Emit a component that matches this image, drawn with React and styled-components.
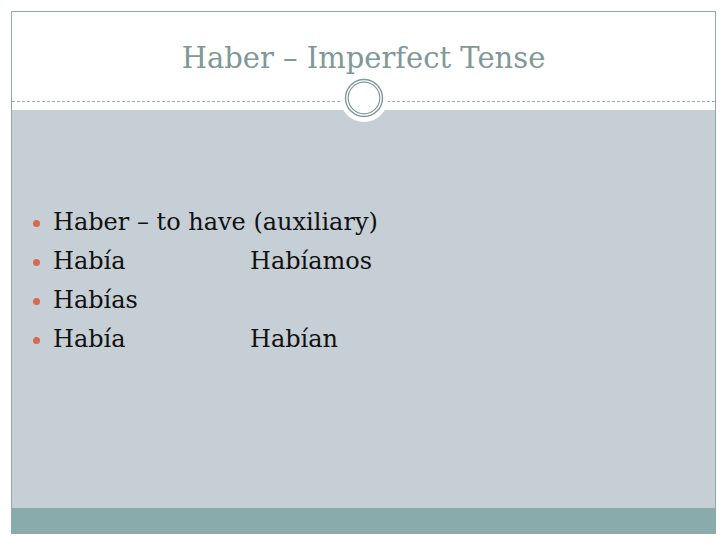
import React from "react";
import styled, { createGlobalStyle } from "styled-components";

const GlobalStyle = createGlobalStyle`
  html, body {
    margin: 0;
    padding: 0;
    background: #ffffff;
  }
`;

const Slide = styled.div`
  box-sizing: border-box;
  width: 705px;
  height: 523px;
  margin: 11px 0 0 11px;
  border: 1px solid #93a9a9;
  display: flex;
  flex-direction: column;
  font-family: "DejaVu Serif", "Liberation Serif", serif;
`;

const Header = styled.div`
  position: relative;
  height: 98px;
  flex-shrink: 0;
  background: #ffffff;
  z-index: 1;
`;

const Title = styled.h1`
  margin: 0;
  padding-top: 26px;
  text-align: center;
  font-weight: 400;
  font-size: 29px;
  line-height: 40px;
  color: #7f9898;
`;

const Rule = styled.div`
  position: relative;
  margin-top: 23px;
  border-top: 1px dashed #9fb0b0;
`;

const Ornament = styled.div`
  position: absolute;
  left: 50%;
  top: -28px;
  width: 48px;
  height: 48px;
  margin-left: -24px;
  border-radius: 50%;
  background: #ffffff;
  display: flex;
  align-items: center;
  justify-content: center;
`;

const Content = styled.div`
  flex: 1;
  background: #c5cfd5;
  padding: 93px 0 0 0;
`;

const List = styled.ul`
  list-style: none;
  margin: 0;
  padding: 0;
`;

const Item = styled.li`
  display: grid;
  grid-template-columns: 41px 197px auto;
  align-items: baseline;
  font-size: 24px;
  line-height: 39px;
  color: #111111;
`;

const Wide = styled.span`
  grid-column: 2 / 4;
`;

const Dot = styled.span`
  justify-self: end;
  margin-right: 13px;
  width: 7px;
  height: 7px;
  border-radius: 50%;
  background: #d8694c;
  align-self: center;
  transform: translateY(1px);
`;

const Footer = styled.div`
  height: 25px;
  flex-shrink: 0;
  background: #8aabab;
`;

const rows = [
  ["Haber – to have (auxiliary)"],
  ["Había", "Habíamos"],
  ["Habías"],
  ["Había", "Habían"],
];

export default function App() {
  return (
    <>
      <GlobalStyle />
      <Slide>
        <Header>
          <Title>Haber – Imperfect Tense</Title>
          <Rule>
            <Ornament>
              <svg width="40" height="40" viewBox="0 0 40 40">
                <circle cx="20" cy="20" r="18.5" fill="none" stroke="#7f9898" strokeWidth="1.4" />
                <circle cx="20" cy="20" r="15.8" fill="none" stroke="#7f9898" strokeWidth="1.2" />
              </svg>
            </Ornament>
          </Rule>
        </Header>
        <Content>
          <List>
            {rows.map((r, i) => (
              <Item key={i}>
                <Dot />
                {r[1] ? (
                  <>
                    <span>{r[0]}</span>
                    <span>{r[1]}</span>
                  </>
                ) : (
                  <Wide>{r[0]}</Wide>
                )}
              </Item>
            ))}
          </List>
        </Content>
        <Footer />
      </Slide>
    </>
  );
}
